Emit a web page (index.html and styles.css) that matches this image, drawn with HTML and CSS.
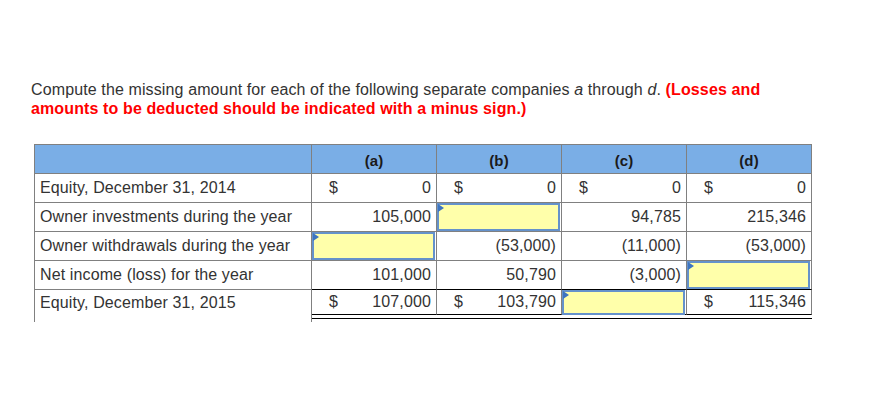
FILE: index.html
```html
<!DOCTYPE html>
<html>
<head>
<meta charset="utf-8">
<link rel="stylesheet" href="styles.css">
</head>
<body>
<div class="page">
  <p class="intro">Compute the missing amount for each of the following separate companies <i>a</i> through <i>d</i>. <span class="red">(Losses and amounts to be deducted should be indicated with a minus sign.)</span></p>
  <table class="grid">
    <tr class="head">
      <th class="lab"></th>
      <th>(a)</th>
      <th>(b)</th>
      <th>(c)</th>
      <th>(d)</th>
    </tr>
    <tr>
      <td class="lab">Equity, December 31, 2014</td>
      <td><div class="amt"><span>$</span><span>0</span></div></td>
      <td><div class="amt"><span>$</span><span>0</span></div></td>
      <td><div class="amt"><span>$</span><span>0</span></div></td>
      <td><div class="amt"><span>$</span><span>0</span></div></td>
    </tr>
    <tr>
      <td class="lab">Owner investments during the year</td>
      <td><div class="amt"><span></span><span>105,000</span></div></td>
      <td><div class="inp"></div></td>
      <td><div class="amt"><span></span><span>94,785</span></div></td>
      <td><div class="amt"><span></span><span>215,346</span></div></td>
    </tr>
    <tr>
      <td class="lab">Owner withdrawals during the year</td>
      <td><div class="inp"></div></td>
      <td><div class="amt"><span></span><span>(53,000)</span></div></td>
      <td><div class="amt"><span></span><span>(11,000)</span></div></td>
      <td><div class="amt"><span></span><span>(53,000)</span></div></td>
    </tr>
    <tr class="pre">
      <td class="lab">Net income (loss) for the year</td>
      <td><div class="amt"><span></span><span>101,000</span></div></td>
      <td><div class="amt"><span></span><span>50,790</span></div></td>
      <td><div class="amt"><span></span><span>(3,000)</span></div></td>
      <td><div class="inp"></div></td>
    </tr>
    <tr class="total">
      <td class="lab">Equity, December 31, 2015</td>
      <td><div class="tot"><div class="amt"><span>$</span><span>107,000</span></div></div></td>
      <td><div class="tot"><div class="amt"><span>$</span><span>103,790</span></div></div></td>
      <td><div class="tot"><div class="inp"></div></div></td>
      <td><div class="tot"><div class="amt"><span>$</span><span>115,346</span></div></div></td>
    </tr>
  </table>
</div>
</body>
</html>
```
FILE: styles.css
```css
html, body {
  margin: 0;
  padding: 0;
  background: #fff;
}
.page {
  padding: 80px 0 0 31px;
  font-family: "Liberation Sans", Arial, sans-serif;
  color: #333;
  letter-spacing: 0.12px;
}
.intro {
  margin: 0;
  width: 780px;
  font-size: 16px;
  line-height: 18.5px;
  padding-top: 1px;
}
.red {
  color: #ff0000;
  font-weight: bold;
}
.grid {
  margin: 26px 0 0 3px;
  border-collapse: separate;
  border-spacing: 0;
  font-size: 16px;
  table-layout: fixed;
  width: 778px;
}
.grid th, .grid td {
  padding: 0;
  width: 124px;
  height: 28px;
  border-right: 1px solid #808080;
  border-bottom: 1px solid #808080;
  vertical-align: middle;
}
.grid .lab {
  width: 271px;
  border-left: 1px solid #808080;
  padding-left: 5px;
  text-align: left;
  font-weight: normal;
}
.head th {
  background: #7aaee6;
  border-top: 1px solid #808080;
  font-size: 15px;
  font-weight: bold;
  color: #1a1a1a;
  text-align: center;
  padding-top: 2px;
  height: 26px;
}
.amt {
  display: flex;
  justify-content: space-between;
  align-items: center;
  padding: 0 5px 0 17px;
  height: 28px;
}
.inp {
  position: relative;
  box-sizing: border-box;
  height: 28px;
  margin-right: 1px;
  background: #ffffaa;
  border: 2px solid #6592cb;
}
.inp::before {
  content: "";
  position: absolute;
  left: -1px;
  top: -1px;
  border-top: 4px solid transparent;
  border-bottom: 4px solid transparent;
  border-left: 6px solid #3d74c0;
}
.pre td:not(.lab) {
  border-bottom-color: #000;
}
.total td {
  height: 28px;
  border-bottom: none;
}
.total td:not(.lab) {
  border-right: none;
  vertical-align: top;
}
.tot {
  height: 24px;
  border-right: 1px solid #808080;
  border-bottom: 1px solid #000;
  box-shadow: 0 3px 0 #fff, 0 4px 0 #000;
}
.tot .amt {
  height: 24px;
}
.tot .inp {
  height: 25px;
}
.total .lab {
  vertical-align: top;
  padding-top: 4px;
}
```
